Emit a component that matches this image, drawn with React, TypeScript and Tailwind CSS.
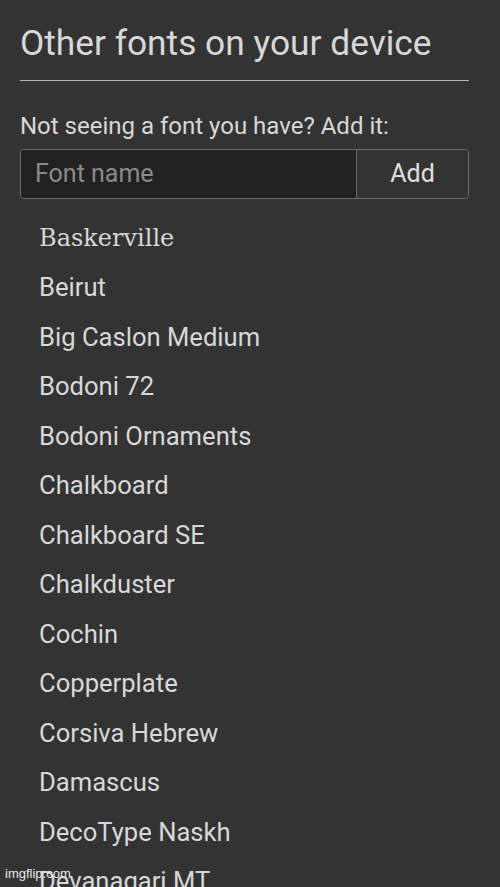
import React from "react";

const fonts = [
  "Beirut",
  "Big Caslon Medium",
  "Bodoni 72",
  "Bodoni Ornaments",
  "Chalkboard",
  "Chalkboard SE",
  "Chalkduster",
  "Cochin",
  "Copperplate",
  "Corsiva Hebrew",
  "Damascus",
  "DecoType Naskh",
  "Devanagari MT",
];

export default function App() {
  return (
    <div
      className="w-[500px] h-[887px] overflow-hidden bg-[#333333] text-[#dddddd] relative"
      style={{ fontFamily: "Roboto, sans-serif" }}
    >
      <div className="px-[20px] pt-[23px]">
        <h1 className="text-[35.3px] leading-[40px] font-normal text-[#d8d8d8]">
          Other fonts on your device
        </h1>
        <div className="mt-[17px] h-px bg-[#b5b5b5] w-[449px]" />
        <p className="mt-[31px] text-[24px] leading-[28px] text-[#d8d8d8]">
          Not seeing a font you have? Add it:
        </p>
        <div className="mt-[9px] flex w-[449px] h-[50px] border border-[#6a6a6a] rounded-[4px] overflow-hidden">
          <input
            className="flex-1 min-w-0 bg-[#212121] px-[14px] text-[25px] text-[#dddddd] placeholder:text-[#8a8a8a] outline-none"
            placeholder="Font name"
            style={{ fontFamily: "Roboto, sans-serif" }}
          />
          <button
            className="w-[112px] border-l border-[#6a6a6a] bg-[#333333] text-[25px] text-[#e0e0e0]"
            style={{ fontFamily: "Roboto, sans-serif" }}
          >
            Add
          </button>
        </div>
        <ul className="mt-[14px] pl-[19px]">
          <li
            className="h-[49.5px] flex items-center text-[24px] text-[#d8d8d8]"
            style={{ fontFamily: "'DejaVu Serif', serif" }}
          >
            Baskerville
          </li>
          {fonts.map((f) => (
            <li key={f} className="h-[49.5px] flex items-center text-[25.6px] text-[#d8d8d8]">
              {f}
            </li>
          ))}
        </ul>
      </div>
      <div
        className="absolute left-[5px] bottom-[4px] text-[13px] text-[#e8e8e8]"
        style={{ fontFamily: "'Liberation Sans', sans-serif" }}
      >
        imgflip.com
      </div>
    </div>
  );
}
